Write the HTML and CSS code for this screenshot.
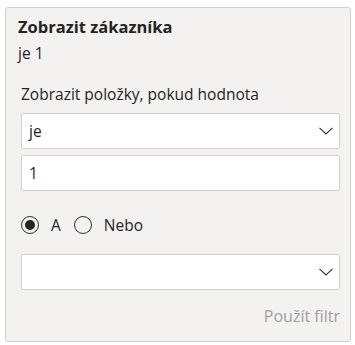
FILE: index.html
```html
<!DOCTYPE html>
<html lang="cs">
<head>
    <meta charset="UTF-8">
    <title>Filtr</title>
    <link rel="stylesheet" href="styles.css">
</head>
<body>
    <div class="card">
        <div class="card-title">Zobrazit zákazníka</div>
        <div class="card-sub">je 1</div>

        <div class="label">Zobrazit položky, pokud hodnota</div>
        <div class="field select">
            <span>je</span>
            <svg class="chevron" width="14" height="8" viewBox="0 0 14 8"><path d="M0.5 0.8 L7 7 L13.5 0.8" fill="none" stroke="#323130" stroke-width="1.1"/></svg>
        </div>
        <div class="field">
            <span>1</span>
        </div>

        <div class="radios">
            <span class="radio checked"></span>
            <span class="radio-label">A</span>
            <span class="radio"></span>
            <span class="radio-label">Nebo</span>
        </div>

        <div class="field select last">
            <span></span>
            <svg class="chevron" width="14" height="8" viewBox="0 0 14 8"><path d="M0.5 0.8 L7 7 L13.5 0.8" fill="none" stroke="#323130" stroke-width="1.1"/></svg>
        </div>

        <div class="apply">Použít filtr</div>
    </div>
</body>
</html>
```

FILE: styles.css
```css
body {
    margin: 0;
    background-color: #ffffff;
    font-family: "Open Sans", "Noto Sans", sans-serif;
    color: #252423;
}

.card {
    margin: 7px 4px 0 5px;
    height: 335px;
    background-color: #f3f2f1;
    border: 1px solid #d2d0ce;
    border-radius: 3px;
    padding: 9px 10px 0 15px;
    box-sizing: border-box;
}

.card-title {
    font-weight: 700;
    font-size: 16.5px;
    margin-left: -3px;
    line-height: 20px;
}

.card-sub {
    font-size: 15.5px;
    line-height: 20px;
    margin-top: 6px;
    margin-left: -3px;
}

.label {
    font-size: 15.5px;
    line-height: 20px;
    margin-top: 21px;
}

.field {
    display: flex;
    align-items: center;
    justify-content: space-between;
    height: 36px;
    background-color: #ffffff;
    border: 1px solid #d2d0ce;
    border-radius: 2px;
    padding: 0 6px 0 7px;
    box-sizing: border-box;
    font-size: 15.5px;
    margin-top: 6px;
}

.select {
    margin-top: 9px;
}

.field.last {
    margin-top: 20px;
}

.chevron {
    display: block;
}

.radios {
    display: flex;
    align-items: center;
    margin-top: 25px;
    height: 18px;
    font-size: 15.5px;
}

.radio {
    width: 18px;
    height: 18px;
    border: 1.3px solid #323130;
    border-radius: 50%;
    position: relative;
    box-sizing: border-box;
}

.radio.checked::after {
    content: "";
    position: absolute;
    left: 2.7px;
    top: 2.7px;
    width: 10px;
    height: 10px;
    border-radius: 50%;
    background-color: #252423;
}

.radio-label {
    margin: 0 13px 0 12px;
}

.apply {
    text-align: right;
    color: #a19f9d;
    font-size: 16px;
    line-height: 20px;
    margin-top: 16px;
}
```
